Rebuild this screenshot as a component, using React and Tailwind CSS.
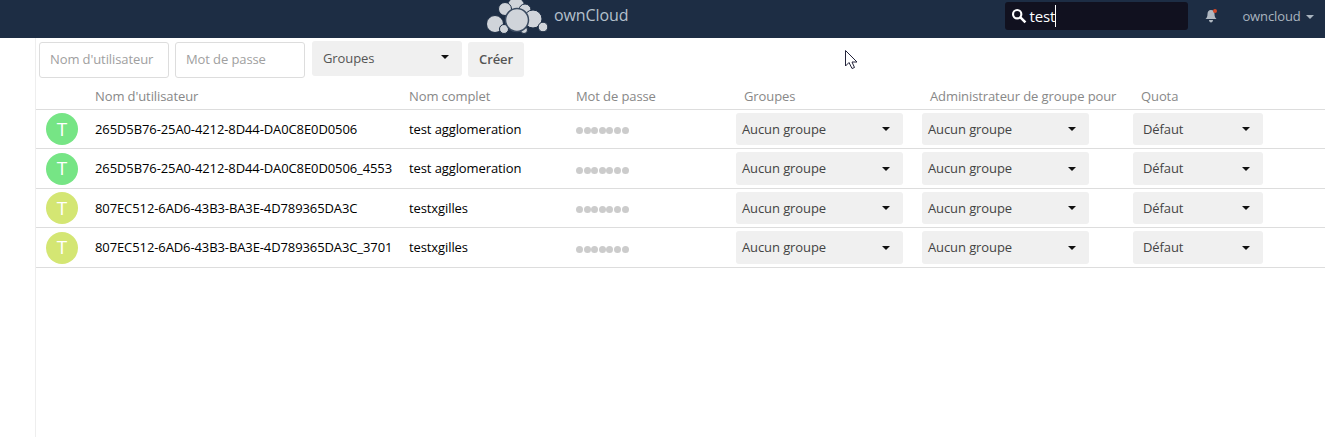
import React from 'react';

const users = [
  { id: '265D5B76-25A0-4212-8D44-DA0C8E0D0506', name: 'test agglomeration', color: 'bg-[#76e585]', h: 'h-[39px]', sel: 'h-[32px]' },
  { id: '265D5B76-25A0-4212-8D44-DA0C8E0D0506_4553', name: 'test agglomeration', color: 'bg-[#76e585]', h: 'h-[40px]', sel: 'h-[33px]' },
  { id: '807EC512-6AD6-43B3-BA3E-4D789365DA3C', name: 'testxgilles', color: 'bg-[#d4e673]', h: 'h-[39px]', sel: 'h-[32px]' },
  { id: '807EC512-6AD6-43B3-BA3E-4D789365DA3C_3701', name: 'testxgilles', color: 'bg-[#d4e673]', h: 'h-[40px]', sel: 'h-[33px]' },
];

const Logo = () => (
  <svg width="62" height="34" viewBox="0 0 62 34" className="shrink-0">
    <g fill="#d0d4da" stroke="#1d2d44" strokeWidth="1">
      <circle cx="29" cy="6" r="8.5" />
      <circle cx="18" cy="9" r="6.5" />
      <circle cx="38" cy="10" r="6" />
      <circle cx="46" cy="19" r="9" />
      <circle cx="56" cy="27" r="4.8" />
      <circle cx="8" cy="24" r="8.5" />
      <circle cx="17" cy="29" r="4.5" />
      <circle cx="37" cy="30" r="3.5" />
    </g>
    <circle cx="30" cy="20" r="11.5" fill="#d0d4da" stroke="#3a4a60" strokeWidth="1.5" />
  </svg>
);

const Select = ({ label, width, height }) => (
  <div className={`${width} ${height} shrink-0 rounded-[3px] bg-[#f0f0f0] flex items-center text-[#444] text-[13px]`}>
    <span className="pl-[6px] pt-[1px]">{label}</span>
    <span className="ml-auto mr-[13px] w-0 h-0 border-x-[4px] border-x-transparent border-t-[4px] border-t-[#111]" />
  </div>
);

const Dots = () => (
  <div className="flex gap-[0.6px] mt-[3px]">
    {[0, 1, 2, 3, 4, 5, 6].map((i) => (
      <span key={i} className="w-[7px] h-[7px] rounded-full bg-[#cccccc]" />
    ))}
  </div>
);

export default function App() {
  return (
    <div className="relative h-[437px] w-[1325px] overflow-hidden bg-white font-['Open_Sans',sans-serif] text-[13px] tracking-[-0.1px]">
      <header className="h-[38px] bg-[#1d2d44] flex items-start">
        <div className="ml-[487px] flex items-center h-[34px] overflow-hidden">
          <Logo />
          <span className="ml-[5px] mb-[4px] text-[16px] text-[#b4c0cc]">ownCloud</span>
        </div>
        <div className="ml-[377px] mt-[2px] w-[183px] h-[28px] rounded-[3px] bg-[#11111f] flex items-center pl-[6px] text-white text-[15px]">
          <svg width="16" height="16" viewBox="0 0 15 15" fill="none" stroke="white" className="shrink-0">
            <circle cx="5.8" cy="5.8" r="3.9" strokeWidth="2" />
            <path d="M8.8 8.8 L13.5 13.5" strokeWidth="2.4" />
          </svg>
          <span className="ml-[2px]">test</span>
          <span className="w-[1px] h-[22px] bg-white" />
        </div>
        <div className="ml-[17px] mt-[9px] relative w-[12px] h-[14px] shrink-0">
          <svg width="12" height="14" viewBox="0 0 12 14" fill="#b0b8c2">
            <path d="M6 1 C3.5 1 2.5 3 2.5 5 C2.5 8 1.5 9 0.5 10 H11.5 C10.5 9 9.5 8 9.5 5 C9.5 3 8.500 1 6 1 Z" />
            <path d="M4 11 H8 C8 12.500 7 13.500 6 13.500 C5 13.500 4 12.500 4 11 Z" />
          </svg>
          <span className="absolute right-[0px] top-[0px] w-[4px] h-[4px] rounded-full bg-[#d2492a]" />
        </div>
        <span className="ml-[25px] mt-[7px] text-[13px] text-[#a9b4bf]">owncloud</span>
        <span className="ml-[5px] mt-[15px] w-0 h-0 border-x-[4px] border-x-transparent border-t-[4px] border-t-[#a9b4bf]" />
      </header>

      <main className="ml-[35px] h-[399px] border-l border-[#eeeeee]">
        <div className="flex items-start pl-[3px] pt-[3px] h-[48px]">
          <input
            placeholder="Nom d'utilisateur"
            className="w-[130px] h-[36px] mt-[1px] rounded-[3px] border border-[#dddddd] px-[10px] pb-[2px] text-[13px] placeholder:text-[#a0a0a0] outline-none"
          />
          <input
            placeholder="Mot de passe"
            className="ml-[6px] w-[130px] h-[36px] mt-[1px] rounded-[3px] border border-[#dddddd] px-[10px] pb-[2px] text-[13px] placeholder:text-[#a0a0a0] outline-none"
          />
          <div className="ml-[7px] w-[150px] h-[35px] rounded-[3px] bg-[#f0f0f0] flex items-center pl-[11px] text-[#555]">
            Groupes
            <span className="ml-auto mr-[13px] mb-[3px] w-0 h-0 border-x-[4px] border-x-transparent border-t-[4px] border-t-[#111]" />
          </div>
          <div className="ml-[6px] mt-[1px] w-[56px] h-[35px] rounded-[3px] bg-[#f0f0f0] flex items-center justify-center font-semibold text-[#555]">
            Créer
          </div>
        </div>

        <div className="flex items-center h-[24px] border-b border-[#dddddd] text-[#888] pb-[1px]">
          <span className="ml-[59px] w-[314px]">Nom d'utilisateur</span>
          <span className="w-[167px]">Nom complet</span>
          <span className="w-[168px]">Mot de passe</span>
          <span className="w-[186px]">Groupes</span>
          <span className="w-[211px]">Administrateur de groupe pour</span>
          <span>Quota</span>
        </div>

        {users.map((u) => (
          <div key={u.id} className={`flex items-center ${u.h} border-b border-[#dddddd] text-[#000]`}>
            <div className={`ml-[10px] w-[32px] h-[32px] shrink-0 rounded-full ${u.color} flex items-center justify-center text-white text-[19px]`}>
              T
            </div>
            <span className="ml-[17px] pt-[1px] w-[314px] whitespace-nowrap">{u.id}</span>
            <span className="w-[167px] pt-[1px]">{u.name}</span>
            <div className="w-[160px]">
              <Dots />
            </div>
            <Select label="Aucun groupe" width="w-[167px]" height={u.sel} />
            <div className="w-[19px] shrink-0" />
            <Select label="Aucun groupe" width="w-[167px]" height={u.sel} />
            <div className="w-[44px] shrink-0" />
            <Select label={<span className="pl-[4px]">Défaut</span>} width="w-[130px]" height={u.sel} />
          </div>
        ))}
      </main>

      <svg width="16" height="22" viewBox="0 0 16 22" className="absolute left-[844px] top-[49px]">
        <path d="M1.5 1.5 V17 L5 13.500 L8 19.500 L10.500 18.500 L8 13 H13 Z" fill="white" stroke="#23233a" strokeWidth="1" />
      </svg>
    </div>
  );
}
